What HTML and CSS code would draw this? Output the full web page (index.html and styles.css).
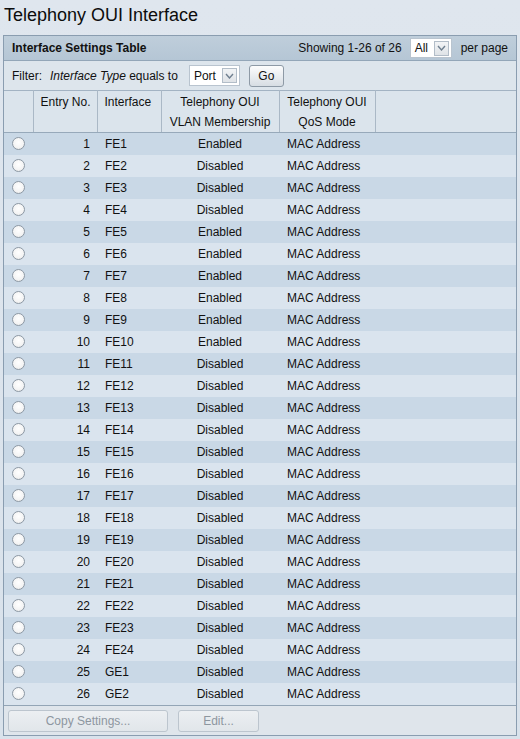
FILE: index.html
```html
<!DOCTYPE html>
<html>
<head>
<meta charset="utf-8">
<link rel="stylesheet" href="styles.css">
</head>
<body>
<h1 class="title">Telephony OUI Interface</h1>
<div class="panel">
  <div class="panel-head">
    <span class="panel-title">Interface Settings Table</span>
    <div class="paging">
      <span>Showing 1-26 of 26</span>
      <span class="select sel-all"><span class="sel-text">All</span><span class="sel-arrow"><svg width="9" height="6" viewBox="0 0 9 6"><path d="M1 1 L4.5 5 L8 1" fill="none" stroke="#6f7f8f" stroke-width="1.4"/></svg></span></span>
      <span>per page</span>
    </div>
  </div>
  <div class="filter">
    <span class="flabel">Filter:</span>
    <span><i>Interface Type</i> equals to</span>
    <span class="select sel-port"><span class="sel-text">Port</span><span class="sel-arrow"><svg width="9" height="6" viewBox="0 0 9 6"><path d="M1 1 L4.5 5 L8 1" fill="none" stroke="#6f7f8f" stroke-width="1.4"/></svg></span></span>
    <button class="btn go">Go</button>
  </div>
  <table class="grid">
    <colgroup>
      <col class="w-radio"><col class="w-entry"><col class="w-if"><col class="w-vlan"><col class="w-qos"><col>
    </colgroup>
    <thead>
      <tr>
        <th class="c-radio"></th>
        <th class="c-entry">Entry No.</th>
        <th class="c-if">Interface</th>
        <th class="c-vlan">Telephony OUI<br>VLAN Membership</th>
        <th class="c-qos">Telephony OUI<br>QoS Mode</th>
        <th class="c-rest"></th>
      </tr>
    </thead>
    <tbody id="rows"></tbody>
  </table>
  <div class="footer">
    <button class="btn dis copy">Copy Settings...</button>
    <button class="btn dis edit">Edit...</button>
  </div>
</div>
<script src="app.js"></script>
</body>
</html>
```
FILE: app.js
```js
const vlan = ["Enabled","Disabled","Disabled","Disabled","Enabled","Enabled","Enabled","Enabled","Enabled","Enabled"];
const tb = document.getElementById("rows");
let html = "";
for (let i = 1; i <= 26; i++) {
  const name = i <= 24 ? "FE" + i : "GE" + (i - 24);
  const v = i <= 10 ? vlan[i - 1] : "Disabled";
  html += '<tr><td class="c-radio"><span class="radio"></span></td>' +
    '<td class="c-entry">' + i + '</td>' +
    '<td class="c-if">' + name + '</td>' +
    '<td class="c-vlan">' + v + '</td>' +
    '<td class="c-qos">MAC Address</td>' +
    '<td class="c-rest"></td></tr>';
}
tb.innerHTML = html;
```
FILE: styles.css
```css
html, body {
  margin: 0;
  padding: 0;
}
body {
  background: linear-gradient(180deg, #dfe6ee 0%, #d9e2eb 100%);
  font-family: "Liberation Sans", Arial, sans-serif;
  font-size: 12px;
  color: #111;
  width: 520px;
  height: 739px;
  overflow: hidden;
}
.title {
  font-size: 18px;
  font-weight: normal;
  margin: 0;
  padding: 5px 0 0 4px;
  height: 35px;
  box-sizing: border-box;
  color: #0c0c0c;
}
.panel {
  margin: 0 3px;
  border: 1px solid #8a9db0;
  background: #dde5ec;
}
.panel-head {
  height: 24px;
  background: linear-gradient(180deg, #bfcedb 0%, #b5c6d5 100%);
  border-bottom: 1px solid #93a6b8;
  display: flex;
  align-items: center;
  justify-content: space-between;
  padding: 0 8px 0 8px;
}
.panel-title {
  font-weight: bold;
  color: #111;
}
.paging {
  display: flex;
  align-items: center;
  gap: 8px;
}
.select {
  display: inline-flex;
  align-items: center;
  background: #fff;
  border: 1px solid #b9c4cf;
  height: 20px;
  box-sizing: border-box;
  padding: 0 2px 0 4px;
  justify-content: space-between;
}
.sel-all { width: 42px; margin-right: 1px; }
.sel-port { width: 51px; height: 21px; margin-left: 6px; }
.sel-arrow {
  width: 15px;
  height: 15px;
  box-sizing: border-box;
  border: 1px solid #b2bdc8;
  background: linear-gradient(180deg, #f2f4f6, #dfe3e7);
  display: inline-flex;
  align-items: center;
  justify-content: center;
}
.filter {
  height: 29px;
  display: flex;
  align-items: center;
  padding-left: 8px;
  gap: 5px;
  background: #dde5ec;
}
.flabel { margin-right: 3px; }
.btn {
  font-family: "Liberation Sans", Arial, sans-serif;
  font-size: 12px;
  border-radius: 3px;
  box-sizing: border-box;
}
.go {
  margin-left: 4px;
  width: 35px;
  height: 22px;
  padding: 0;
  border: 1px solid #8e9aa6;
  background: linear-gradient(180deg, #fdfdfd 0%, #e6eaee 60%, #d7dde3 100%);
  color: #111;
}
.grid {
  width: 100%;
  table-layout: fixed;
  border-collapse: collapse;
  border-top: 1px solid #a3b3c3;
}
.w-radio { width: 29px; }
.w-entry { width: 64px; }
.w-if { width: 64px; }
.w-vlan { width: 118px; }
.w-qos { width: 96px; }
.grid th {
  font-weight: normal;
  background: #dbe4ec;
  line-height: 20px;
  padding: 1px 0 0 0;
  height: 42px;
  box-sizing: border-box;
  vertical-align: top;
  border-left: 1px solid #f5f8fa;
  border-right: 1px solid #aab8c6;
  border-bottom: 1px solid #97a9ba;
  color: #111;
}
.grid th.c-radio { border-left: none; }
.grid th.c-rest { border-right: none; }
th.c-entry, th.c-if { text-align: left; padding-left: 7px; }
td {
  height: 22px;
  padding: 0;
  line-height: 22px;
  white-space: nowrap;
}
tbody tr:nth-child(odd) td { background: #c9d8e6; }
tbody tr:nth-child(even) td { background: #dae4ee; }
td.c-entry { text-align: right; padding-right: 7px; }
td.c-if { padding-left: 8px; }
td.c-vlan { text-align: center; }
td.c-qos { padding-left: 8px; }
td.c-radio { text-align: center; }
.radio {
  display: inline-block;
  width: 13px;
  height: 13px;
  box-sizing: border-box;
  border-radius: 50%;
  border: 1px solid #8c98a4;
  background: radial-gradient(circle at 50% 40%, #ffffff 0%, #f4f4f4 60%, #e2e2e2 100%);
  vertical-align: middle;
  margin-top: -2px;
}
tbody tr:last-child td { border-bottom: 1px solid #93a5b6; }
.footer {
  height: 29px;
  display: flex;
  align-items: center;
  padding-left: 4px;
  gap: 10px;
  background: #dfe5eb;
}
.dis {
  height: 22px;
  border: 1px solid #bcc5ce;
  background: linear-gradient(180deg, #eceff2 0%, #e1e6ea 100%);
  color: #8d969f;
}
.copy { width: 160px; }
.edit { width: 81px; }
```
